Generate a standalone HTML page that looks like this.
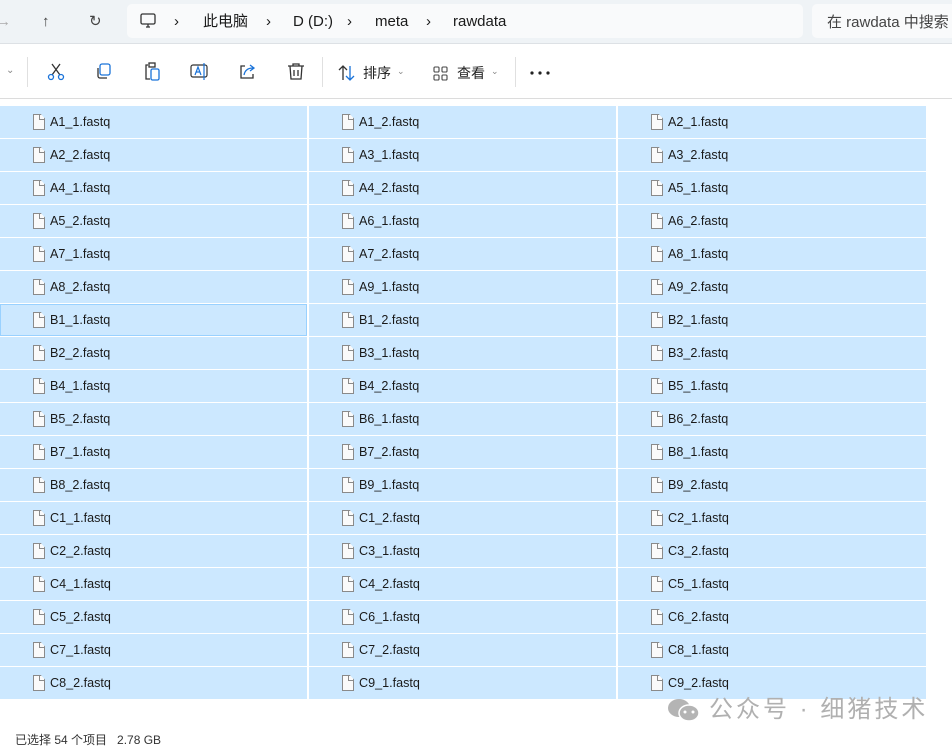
<!DOCTYPE html><html><head><meta charset="utf-8"><style>
*{margin:0;padding:0;box-sizing:border-box}
body{width:952px;height:749px;background:#fff;font-family:"Liberation Sans","Noto Sans CJK SC",sans-serif;position:relative;overflow:hidden;color:#1a1a1a}
.top{position:absolute;left:0;top:0;width:952px;height:44px;background:#eff3f6;border-bottom:1px solid #dde1e5}
.addr{position:absolute;left:127px;top:4px;width:676px;height:34px;background:#f9fafb;border-radius:5px}
.search{position:absolute;left:812px;top:4px;width:150px;height:34px;background:#f9fafb;border-radius:5px;font-size:15px;line-height:18px;color:#444;padding:10px 0 0 15px;white-space:nowrap}
.t{position:absolute;font-size:15px;line-height:18px;top:13px;white-space:nowrap}
.tb{position:absolute;left:0;top:45px;width:952px;height:54px;border-bottom:1px solid #dcdcdc;background:#fff}
.g{position:absolute;font-size:14px;line-height:16px;color:#222}
.sep{position:absolute;top:12px;width:1px;height:30px;background:#e0e0e0}
.r{position:absolute;height:32px;background:#cce8ff;font-size:12.6px;line-height:15px}
.r span{position:absolute;top:9px}
.ic{position:absolute;top:8px;width:12px;height:16px;border:1px solid #8a8a8a;background:#fafafa;clip-path:polygon(0 0,65% 0,100% 28%,100% 100%,0 100%)}
.ic:after{content:"";position:absolute;right:0;top:0;width:4px;height:4px;border-left:1px solid #8a8a8a;border-bottom:1px solid #8a8a8a}
</style></head><body>
<div class="top">
<div class="t" style="left:-4px;color:#aaa">→</div>
<div class="t" style="left:42px;color:#444">↑</div>
<div class="t" style="left:89px;color:#444">↻</div>
<div class="addr"></div>
<svg style="position:absolute;left:140px;top:13px" width="16" height="16"><rect x="1" y="1" width="14" height="10" rx="1.5" fill="none" stroke="#333" stroke-width="1.3"/><path d="M6 14h4M8 11v3" stroke="#333" stroke-width="1.3"/></svg>
<div class="t" style="left:174px">›</div><div class="t" style="left:203px">此电脑</div>
<div class="t" style="left:266px">›</div><div class="t" style="left:293px">D (D:)</div>
<div class="t" style="left:347px">›</div><div class="t" style="left:375px">meta</div>
<div class="t" style="left:426px">›</div><div class="t" style="left:453px">rawdata</div>
<div class="search">在 rawdata 中搜索</div>
</div>
<div class="tb">
<div class="g" style="left:6px;top:18px;font-size:10px;color:#888">⌄</div>
<div class="sep" style="left:27px"></div>
<svg style="position:absolute;left:47px;top:18px" width="18" height="18" fill="none" stroke-width="1.3"><path d="M5 1l8 11M13 1L5 12" stroke="#333"/><circle cx="4" cy="14" r="2.5" stroke="#1a73d9"/><circle cx="14" cy="14" r="2.5" stroke="#1a73d9"/></svg>
<svg style="position:absolute;left:95px;top:18px" width="18" height="18" fill="none" stroke-width="1.3"><rect x="5" y="1" width="10" height="11" rx="2" stroke="#1a73d9"/><path d="M3 5v8a2 2 0 0 0 2 2h7" stroke="#333"/></svg>
<svg style="position:absolute;left:143px;top:17px" width="18" height="20" fill="none" stroke-width="1.3"><path d="M5 3H3v14h4" stroke="#333"/><rect x="6" y="1" width="6" height="4" stroke="#333"/><rect x="8" y="7" width="8" height="11" rx="1.5" stroke="#1a73d9"/></svg>
<svg style="position:absolute;left:190px;top:18px" width="20" height="18" fill="none" stroke-width="1.2"><rect x="1" y="2" width="16" height="12" rx="2" stroke="#333"/><path d="M5 12l3-8 3 8M6 9h4" stroke="#1a73d9"/><path d="M14 0v17" stroke="#1a73d9"/></svg>
<svg style="position:absolute;left:238px;top:18px" width="20" height="18" fill="none" stroke-width="1.3"><path d="M7 3H3v12h12v-4" stroke="#333"/><path d="M6 12c1-5 4-7 9-7M12 2l4 3-4 3" stroke="#1a73d9"/></svg>
<svg style="position:absolute;left:287px;top:17px" width="18" height="19" fill="none" stroke="#333" stroke-width="1.3"><path d="M1 4h16M6 4V2h6v2M3 4l1 13h10l1-13M7 8v6M11 8v6"/></svg>
<div class="sep" style="left:322px"></div>
<svg style="position:absolute;left:338px;top:20px" width="18" height="16" fill="none" stroke-width="1.3"><path d="M5 15V1M1 5l4-4 4 4" stroke="#333"/><path d="M12 1v14M8 11l4 4 4-4" stroke="#1a73d9"/></svg>
<div class="g" style="left:363px;top:20px">排序</div><div class="g" style="left:397px;top:18px;font-size:9px;color:#888">⌄</div>
<svg style="position:absolute;left:433px;top:21px" width="16" height="16" fill="none" stroke="#444" stroke-width="1.1"><rect x="1" y="1" width="5" height="5" rx="1"/><rect x="9" y="1" width="5" height="5" rx="1"/><rect x="1" y="9" width="5" height="5" rx="1"/><rect x="9" y="9" width="5" height="5" rx="1"/></svg>
<div class="g" style="left:457px;top:20px">查看</div><div class="g" style="left:491px;top:18px;font-size:9px;color:#888">⌄</div>
<div class="sep" style="left:515px"></div>
<svg style="position:absolute;left:530px;top:26px" width="20" height="4" fill="#222"><circle cx="2" cy="2" r="1.6"/><circle cx="10" cy="2" r="1.6"/><circle cx="18" cy="2" r="1.6"/></svg>
</div>
<div id="list">
<div class="r" style="left:0;top:106px;width:307px"><i class="ic" style="left:33px"></i><span style="left:50px">A1_1.fastq</span></div><div class="r" style="left:309px;top:106px;width:307px"><i class="ic" style="left:33px"></i><span style="left:50px">A1_2.fastq</span></div><div class="r" style="left:618px;top:106px;width:308px"><i class="ic" style="left:33px"></i><span style="left:50px">A2_1.fastq</span></div>
<div class="r" style="left:0;top:139px;width:307px"><i class="ic" style="left:33px"></i><span style="left:50px">A2_2.fastq</span></div><div class="r" style="left:309px;top:139px;width:307px"><i class="ic" style="left:33px"></i><span style="left:50px">A3_1.fastq</span></div><div class="r" style="left:618px;top:139px;width:308px"><i class="ic" style="left:33px"></i><span style="left:50px">A3_2.fastq</span></div>
<div class="r" style="left:0;top:172px;width:307px"><i class="ic" style="left:33px"></i><span style="left:50px">A4_1.fastq</span></div><div class="r" style="left:309px;top:172px;width:307px"><i class="ic" style="left:33px"></i><span style="left:50px">A4_2.fastq</span></div><div class="r" style="left:618px;top:172px;width:308px"><i class="ic" style="left:33px"></i><span style="left:50px">A5_1.fastq</span></div>
<div class="r" style="left:0;top:205px;width:307px"><i class="ic" style="left:33px"></i><span style="left:50px">A5_2.fastq</span></div><div class="r" style="left:309px;top:205px;width:307px"><i class="ic" style="left:33px"></i><span style="left:50px">A6_1.fastq</span></div><div class="r" style="left:618px;top:205px;width:308px"><i class="ic" style="left:33px"></i><span style="left:50px">A6_2.fastq</span></div>
<div class="r" style="left:0;top:238px;width:307px"><i class="ic" style="left:33px"></i><span style="left:50px">A7_1.fastq</span></div><div class="r" style="left:309px;top:238px;width:307px"><i class="ic" style="left:33px"></i><span style="left:50px">A7_2.fastq</span></div><div class="r" style="left:618px;top:238px;width:308px"><i class="ic" style="left:33px"></i><span style="left:50px">A8_1.fastq</span></div>
<div class="r" style="left:0;top:271px;width:307px"><i class="ic" style="left:33px"></i><span style="left:50px">A8_2.fastq</span></div><div class="r" style="left:309px;top:271px;width:307px"><i class="ic" style="left:33px"></i><span style="left:50px">A9_1.fastq</span></div><div class="r" style="left:618px;top:271px;width:308px"><i class="ic" style="left:33px"></i><span style="left:50px">A9_2.fastq</span></div>
<div class="r" style="left:0;top:304px;width:307px;border:1px solid #99d1ff"><i class="ic" style="left:32px;top:7px"></i><span style="left:49px;top:8px">B1_1.fastq</span></div><div class="r" style="left:309px;top:304px;width:307px"><i class="ic" style="left:33px"></i><span style="left:50px">B1_2.fastq</span></div><div class="r" style="left:618px;top:304px;width:308px"><i class="ic" style="left:33px"></i><span style="left:50px">B2_1.fastq</span></div>
<div class="r" style="left:0;top:337px;width:307px"><i class="ic" style="left:33px"></i><span style="left:50px">B2_2.fastq</span></div><div class="r" style="left:309px;top:337px;width:307px"><i class="ic" style="left:33px"></i><span style="left:50px">B3_1.fastq</span></div><div class="r" style="left:618px;top:337px;width:308px"><i class="ic" style="left:33px"></i><span style="left:50px">B3_2.fastq</span></div>
<div class="r" style="left:0;top:370px;width:307px"><i class="ic" style="left:33px"></i><span style="left:50px">B4_1.fastq</span></div><div class="r" style="left:309px;top:370px;width:307px"><i class="ic" style="left:33px"></i><span style="left:50px">B4_2.fastq</span></div><div class="r" style="left:618px;top:370px;width:308px"><i class="ic" style="left:33px"></i><span style="left:50px">B5_1.fastq</span></div>
<div class="r" style="left:0;top:403px;width:307px"><i class="ic" style="left:33px"></i><span style="left:50px">B5_2.fastq</span></div><div class="r" style="left:309px;top:403px;width:307px"><i class="ic" style="left:33px"></i><span style="left:50px">B6_1.fastq</span></div><div class="r" style="left:618px;top:403px;width:308px"><i class="ic" style="left:33px"></i><span style="left:50px">B6_2.fastq</span></div>
<div class="r" style="left:0;top:436px;width:307px"><i class="ic" style="left:33px"></i><span style="left:50px">B7_1.fastq</span></div><div class="r" style="left:309px;top:436px;width:307px"><i class="ic" style="left:33px"></i><span style="left:50px">B7_2.fastq</span></div><div class="r" style="left:618px;top:436px;width:308px"><i class="ic" style="left:33px"></i><span style="left:50px">B8_1.fastq</span></div>
<div class="r" style="left:0;top:469px;width:307px"><i class="ic" style="left:33px"></i><span style="left:50px">B8_2.fastq</span></div><div class="r" style="left:309px;top:469px;width:307px"><i class="ic" style="left:33px"></i><span style="left:50px">B9_1.fastq</span></div><div class="r" style="left:618px;top:469px;width:308px"><i class="ic" style="left:33px"></i><span style="left:50px">B9_2.fastq</span></div>
<div class="r" style="left:0;top:502px;width:307px"><i class="ic" style="left:33px"></i><span style="left:50px">C1_1.fastq</span></div><div class="r" style="left:309px;top:502px;width:307px"><i class="ic" style="left:33px"></i><span style="left:50px">C1_2.fastq</span></div><div class="r" style="left:618px;top:502px;width:308px"><i class="ic" style="left:33px"></i><span style="left:50px">C2_1.fastq</span></div>
<div class="r" style="left:0;top:535px;width:307px"><i class="ic" style="left:33px"></i><span style="left:50px">C2_2.fastq</span></div><div class="r" style="left:309px;top:535px;width:307px"><i class="ic" style="left:33px"></i><span style="left:50px">C3_1.fastq</span></div><div class="r" style="left:618px;top:535px;width:308px"><i class="ic" style="left:33px"></i><span style="left:50px">C3_2.fastq</span></div>
<div class="r" style="left:0;top:568px;width:307px"><i class="ic" style="left:33px"></i><span style="left:50px">C4_1.fastq</span></div><div class="r" style="left:309px;top:568px;width:307px"><i class="ic" style="left:33px"></i><span style="left:50px">C4_2.fastq</span></div><div class="r" style="left:618px;top:568px;width:308px"><i class="ic" style="left:33px"></i><span style="left:50px">C5_1.fastq</span></div>
<div class="r" style="left:0;top:601px;width:307px"><i class="ic" style="left:33px"></i><span style="left:50px">C5_2.fastq</span></div><div class="r" style="left:309px;top:601px;width:307px"><i class="ic" style="left:33px"></i><span style="left:50px">C6_1.fastq</span></div><div class="r" style="left:618px;top:601px;width:308px"><i class="ic" style="left:33px"></i><span style="left:50px">C6_2.fastq</span></div>
<div class="r" style="left:0;top:634px;width:307px"><i class="ic" style="left:33px"></i><span style="left:50px">C7_1.fastq</span></div><div class="r" style="left:309px;top:634px;width:307px"><i class="ic" style="left:33px"></i><span style="left:50px">C7_2.fastq</span></div><div class="r" style="left:618px;top:634px;width:308px"><i class="ic" style="left:33px"></i><span style="left:50px">C8_1.fastq</span></div>
<div class="r" style="left:0;top:667px;width:307px"><i class="ic" style="left:33px"></i><span style="left:50px">C8_2.fastq</span></div><div class="r" style="left:309px;top:667px;width:307px"><i class="ic" style="left:33px"></i><span style="left:50px">C9_1.fastq</span></div><div class="r" style="left:618px;top:667px;width:308px"><i class="ic" style="left:33px"></i><span style="left:50px">C9_2.fastq</span></div>
</div>
<svg style="position:absolute;left:666px;top:696px" width="36" height="28"><ellipse cx="13" cy="12" rx="11" ry="9" fill="#b4b4b4"/><ellipse cx="23" cy="17" rx="10" ry="8" fill="#b4b4b4" stroke="#fff" stroke-width="1.5"/><circle cx="19" cy="16" r="1.5" fill="#fff"/><circle cx="27" cy="16" r="1.5" fill="#fff"/></svg>
<div style="position:absolute;left:709px;top:696px;font-size:24px;line-height:28px;color:#b0b0b0;white-space:nowrap;letter-spacing:3px">公众号 · 细猪技术</div>
<div style="position:absolute;left:15px;top:733px;font-size:12px;line-height:14px;color:#333;white-space:nowrap">已选择 54 个项目&nbsp;&nbsp;&nbsp;2.78 GB</div>
</body></html>
